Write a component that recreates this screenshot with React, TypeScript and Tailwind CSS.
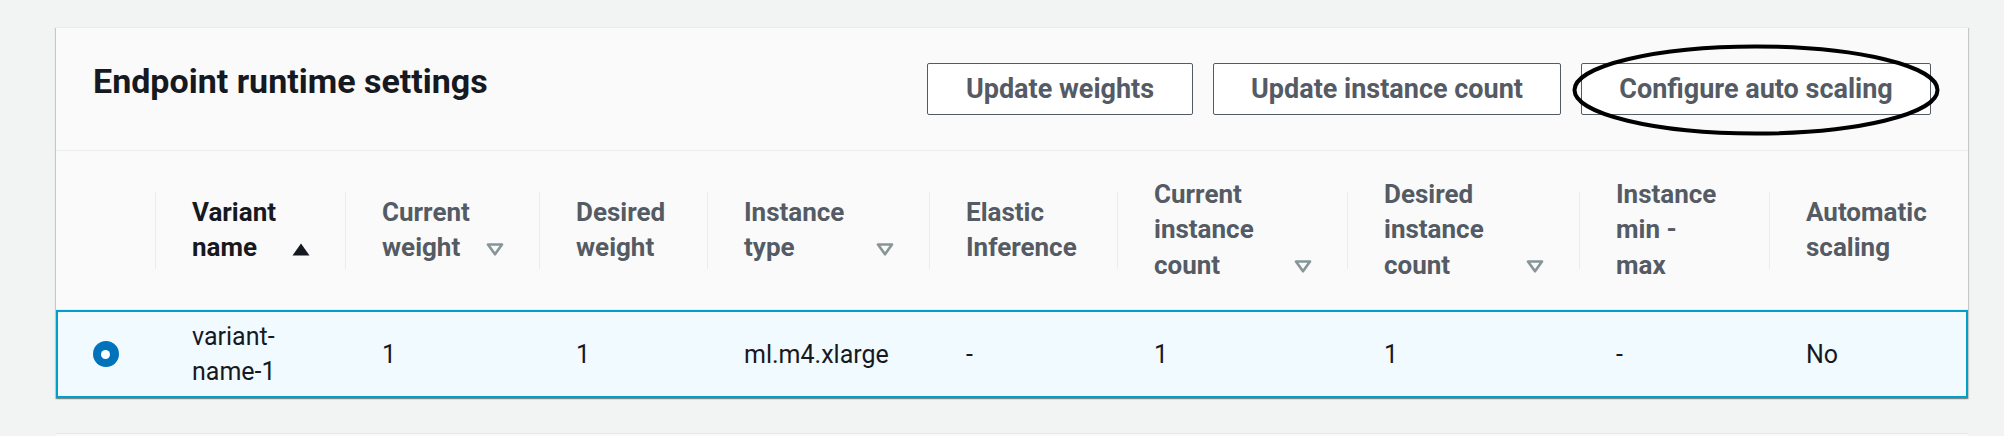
import React from "react";

const FONT = { fontFamily: "Roboto, 'Liberation Sans', Arial, sans-serif" };

function SortUp() {
  return (
    <svg width="18" height="13" viewBox="0 0 18 13">
      <path d="M9 0.5 L17.5 12.5 L0.5 12.5 Z" fill="#16191f" />
    </svg>
  );
}

function SortDown() {
  return (
    <svg width="18" height="13" viewBox="0 0 18 13">
      <path
        d="M2 1.5 H16 L9 11.3 Z"
        fill="none"
        stroke="#879596"
        strokeWidth="2.6"
        strokeLinejoin="round"
      />
    </svg>
  );
}

type Col = { lines: string[]; icon?: "up" | "down"; dark?: boolean };

const cols: Col[] = [
  { lines: ["Variant", "name"], icon: "up", dark: true },
  { lines: ["Current", "weight"], icon: "down" },
  { lines: ["Desired", "weight"] },
  { lines: ["Instance", "type"], icon: "down" },
  { lines: ["Elastic", "Inference"] },
  { lines: ["Current", "instance", "count"], icon: "down" },
  { lines: ["Desired", "instance", "count"], icon: "down" },
  { lines: ["Instance", "min -", "max"] },
  { lines: ["Automatic", "scaling"] },
];

const values: string[][] = [
  ["variant-", "name-1"],
  ["1"],
  ["1"],
  ["ml.m4.xlarge"],
  ["-"],
  ["1"],
  ["1"],
  ["-"],
  ["No"],
];

const GRID =
  "grid grid-cols-[99px_190px_194px_168px_222px_188px_230px_232px_190px_1fr]";

function HeaderCell({ col }: { col: Col }) {
  return (
    <div className="flex items-center h-full">
      <div className="w-px h-[77px] bg-[#eaeded]" />
      <div className="flex-1 flex items-end justify-between pl-[36px] pr-[35px]">
        <div
          className={`text-[26px] font-bold leading-[35.5px] ${
            col.dark ? "text-[#16191f]" : "text-[#545b64]"
          }`}
        >
          {col.lines.map((l, i) => (
            <div key={i} className="whitespace-nowrap">
              {l}
            </div>
          ))}
        </div>
        {col.icon && (
          <span className="mb-[10px] flex">
            {col.icon === "up" ? <SortUp /> : <SortDown />}
          </span>
        )}
      </div>
    </div>
  );
}

function Button({ label, w }: { label: string; w: string }) {
  return (
    <div
      className={`${w} h-[52px] flex items-center justify-center bg-white border border-[#545b64] rounded-[2px] text-[#545b64] text-[27px] font-bold whitespace-nowrap`}
    >
      {label}
    </div>
  );
}

export default function App() {
  return (
    <div
      className="w-[2004px] h-[436px] overflow-hidden bg-[#f2f3f3] pt-[27px] pl-[56px] pr-[36px]"
      style={FONT}
    >
      <div className="bg-[#fafafa] border-t border-[#eaeded] shadow-[0_1px_1px_0_rgba(0,28,36,0.3),1px_1px_1px_0_rgba(0,28,36,0.15),-1px_1px_1px_0_rgba(0,28,36,0.15)]">
        {/* Header */}
        <div className="h-[123px] border-b border-[#eaeded] flex items-start justify-between pl-[37px] pr-[37px] pt-[33px]">
          <h2 className="text-[34px] font-bold leading-[40px] text-[#16191f] whitespace-nowrap">
            Endpoint runtime settings
          </h2>
          <div className="flex gap-[20px] mt-[2px]">
            <Button label="Update weights" w="w-[266px]" />
            <Button label="Update instance count" w="w-[348px]" />
            <div className="relative">
              <Button label="Configure auto scaling" w="w-[350px]" />
              <svg
                className="absolute left-[-9px] top-[-19px] pointer-events-none"
                width="368"
                height="92"
                viewBox="0 0 368 92"
              >
                <ellipse
                  cx="184"
                  cy="46"
                  rx="181.5"
                  ry="43.5"
                  fill="none"
                  stroke="#000"
                  strokeWidth="4"
                />
              </svg>
            </div>
          </div>
        </div>

        {/* Table header */}
        <div className={`${GRID} h-[159px] border-b border-[#eaeded]`}>
          <div />
          {cols.map((c, i) => (
            <HeaderCell key={i} col={c} />
          ))}
        </div>

        {/* Selected row */}
        <div
          className={`${GRID} h-[88px] bg-[#f1faff] shadow-[inset_0_0_0_2px_#00a1c9] text-[25px] text-[#16191f] leading-[35px]`}
        >
          <div className="flex items-center justify-center">
            <div className="w-[26px] h-[26px] rounded-full bg-[#0073bb] flex items-center justify-center">
              <div className="w-[9px] h-[9px] rounded-full bg-white" />
            </div>
          </div>
          {values.map((v, i) => (
            <div key={i} className="flex flex-col justify-center pl-[37px]">
              {v.map((l, j) => (
                <div key={j} className="whitespace-nowrap">
                  {l}
                </div>
              ))}
            </div>
          ))}
        </div>
      </div>

      {/* Next container peeking at the bottom */}
      <div className="mt-[35px] h-[20px] bg-[#fafafa] border-t border-[#e3e6e6]" />
    </div>
  );
}
